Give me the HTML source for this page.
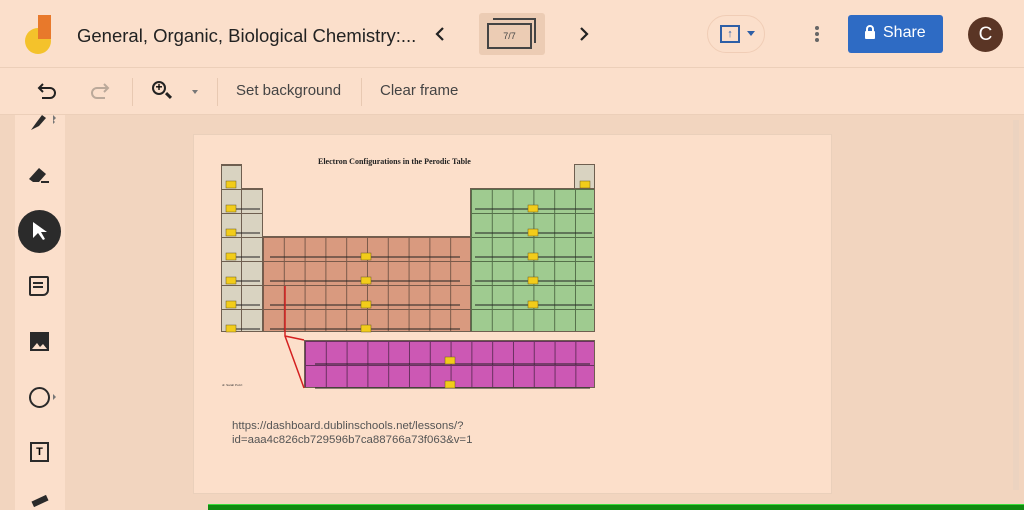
<!DOCTYPE html>
<html><head><style>
*{margin:0;padding:0;box-sizing:border-box}
body{width:1024px;height:510px;overflow:hidden;background:#f2d5bf;font-family:"Liberation Sans",sans-serif;position:relative}
.a{position:absolute}
.blk{position:absolute;border:1px solid #6f5f50}
</style></head><body>
<div class="a" style="left:0;top:0;width:1024px;height:68px;background:#fbdfcb;border-bottom:1px solid #eccfb9"></div>
<div class="a" style="left:25px;top:28px;width:26px;height:26px;border-radius:50%;background:#f4c22b"></div>
<div class="a" style="left:38px;top:15px;width:13px;height:24px;background:#e8792b"></div>
<div class="a" style="left:77px;top:25px;font-size:18.5px;color:#222">General, Organic, Biological Chemistry:...</div>
<svg class="a" style="left:433px;top:26px" width="14" height="16"><path d="M10 2 L4 8 L10 14" stroke="#222" stroke-width="2.2" fill="none"/></svg>
<div class="a" style="left:479px;top:13px;width:66px;height:42px;background:#ecccb4;border-radius:3px"></div>
<div class="a" style="left:493px;top:18px;width:43px;height:25px;border:2px solid #444;border-left:none;border-bottom:none"></div>
<div class="a" style="left:487px;top:23px;width:45px;height:26px;border:2px solid #444;font-size:9px;color:#444;text-align:center;line-height:22px;background:#ecccb4">7/7</div>
<svg class="a" style="left:577px;top:26px" width="14" height="16"><path d="M4 2 L10 8 L4 14" stroke="#222" stroke-width="2.2" fill="none"/></svg>
<div class="a" style="left:707px;top:15px;width:58px;height:38px;border:1px solid #f0cdb6;border-radius:19px"></div>
<div class="a" style="left:720px;top:25px;width:20px;height:18px;border:2px solid #2e5fa6;color:#2e5fa6;font-size:11px;text-align:center;line-height:14px;font-weight:bold">↑</div>
<div class="a" style="left:747px;top:31px;border:4px solid transparent;border-top:5px solid #2e5fa6"></div>
<div class="a" style="left:815px;top:26px;width:4px;height:4px;background:#666;border-radius:50%;box-shadow:0 6px #666,0 12px #666"></div>
<div class="a" style="left:848px;top:15px;width:95px;height:38px;background:#2e6bc4;border-radius:3px;color:#fff;font-size:16px;line-height:36px;padding-left:35px">Share</div>
<div class="a" style="left:865px;top:31px;width:10px;height:8px;background:#fff;border-radius:1px"></div>
<div class="a" style="left:866px;top:25px;width:8px;height:9px;border:2px solid #fff;border-radius:4px 4px 0 0"></div>
<div class="a" style="left:968px;top:17px;width:35px;height:35px;border-radius:50%;background:#5a3525;color:#fff;font-size:19px;text-align:center;line-height:35px">C</div>
<div class="a" style="left:0;top:68px;width:1024px;height:47px;background:#fbdfcb;border-bottom:1px solid #eccfb9"></div>
<svg class="a" style="left:37px;top:81px" width="22" height="20"><path d="M6 3 L2 7 L6 11 M2 7 H13 A5 5 0 0 1 13 17 H5" stroke="#222" stroke-width="2" fill="none"/></svg>
<svg class="a" style="left:88px;top:81px" width="22" height="20"><path d="M16 3 L20 7 L16 11 M20 7 H9 A5 5 0 0 0 9 17 H17" stroke="#bba99a" stroke-width="2" fill="none"/></svg>
<div class="a" style="left:132px;top:78px;width:1px;height:28px;background:#e8c9b2"></div>
<div class="a" style="left:152px;top:81px;width:14px;height:14px;border:2.5px solid #222;border-radius:50%;font-size:12px;line-height:9px;text-align:center;font-weight:bold">+</div>
<div class="a" style="left:165px;top:94px;width:7px;height:3px;background:#222;transform:rotate(45deg)"></div>
<div class="a" style="left:192px;top:90px;border:3px solid transparent;border-top:4px solid #777"></div>
<div class="a" style="left:217px;top:78px;width:1px;height:28px;background:#e8c9b2"></div>
<div class="a" style="left:236px;top:82px;font-size:15px;color:#444">Set background</div>
<div class="a" style="left:361px;top:78px;width:1px;height:28px;background:#e8c9b2"></div>
<div class="a" style="left:380px;top:82px;font-size:15px;color:#444">Clear frame</div>
<div class="a" style="left:15px;top:115px;width:50px;height:395px;background:#fbdfcb"></div>
<svg class="a" style="left:28px;top:113px" width="30" height="20"><path d="M3 17 L8 10 L14 2 L18 5 L11 13 Z" fill="#2a2a2a"/><path d="M25 7 L27 9 L25 11Z" fill="#777"/></svg>
<svg class="a" style="left:27px;top:163px" width="26" height="24"><path d="M2 16 L12 5 L19 11 L12 19 H6Z" fill="#2a2a2a"/><rect x="14" y="18" width="8" height="2" fill="#2a2a2a"/></svg>
<div class="a" style="left:18px;top:210px;width:43px;height:43px;border-radius:50%;background:#2b2b2b"></div>
<svg class="a" style="left:30px;top:220px" width="20" height="22"><path d="M3 2 L3 18 L8 13 L13 20 L15 19 L11 12 L17 12 Z" fill="#fff"/></svg>
<div class="a" style="left:29px;top:276px;width:20px;height:20px;border:2px solid #2a2a2a;border-radius:2px 2px 6px 2px"></div>
<div class="a" style="left:33px;top:282px;width:10px;height:2px;background:#2a2a2a;box-shadow:-0px 4px #2a2a2a"></div>
<div class="a" style="left:30px;top:332px;width:19px;height:19px;background:#2a2a2a"></div>
<svg class="a" style="left:31px;top:340px" width="17" height="10"><path d="M1 9 L6 3 L9 7 L12 4 L16 9Z" fill="#fbdfcb"/></svg>
<div class="a" style="left:29px;top:387px;width:21px;height:21px;border:2px solid #2a2a2a;border-radius:50%"></div>
<div class="a" style="left:53px;top:394px;border:3px solid transparent;border-left:3px solid #777"></div>
<div class="a" style="left:53px;top:115px;border:3px solid transparent;border-left:3px solid #777"></div>
<div class="a" style="left:30px;top:442px;width:19px;height:20px;border:2px solid #2a2a2a;font-size:11px;font-weight:bold;text-align:center;line-height:16px">T</div>
<div class="a" style="left:32px;top:498px;width:16px;height:6px;background:#2a2a2a;transform:rotate(-25deg)"></div>
<div class="a" style="left:193px;top:134px;width:639px;height:360px;background:#fcdfca;border:1px solid #ead0bb"></div>
<div class="a" style="left:1013px;top:120px;width:6px;height:370px;background:#ecd3c0"></div>
<div class="a" style="left:318px;top:157px;font-family:'Liberation Serif',serif;font-size:8px;font-weight:bold;color:#222">Electron Configurations in the Perodic Table</div>
<div class="blk" style="left:221px;top:164px;width:21px;height:168px;background:#d9d3c1;background-image:linear-gradient(#6f5f50 1px,transparent 1px);background-size:100% 24px"></div>
<div class="blk" style="left:241px;top:188px;width:22px;height:144px;background:#d9d3c1;background-image:linear-gradient(#6f5f50 1px,transparent 1px);background-size:100% 24px"></div>
<div class="blk" style="left:262px;top:236px;width:209px;height:96px;background:#d99a7f;background-image:linear-gradient(#7a5a4a 1px,transparent 1px),linear-gradient(90deg,#7a5a4a 1px,transparent 1px);background-size:20.8px 24px"></div>
<div class="blk" style="left:470px;top:188px;width:125px;height:144px;background:#9fcb90;background-image:linear-gradient(#55704a 1px,transparent 1px),linear-gradient(90deg,#55704a 1px,transparent 1px);background-size:20.8px 24px"></div>
<div class="blk" style="left:574px;top:164px;width:21px;height:25px;background:#d9d3c1"></div>
<div class="blk" style="left:304px;top:340px;width:291px;height:48px;background:#cc58b4;background-image:linear-gradient(#6a3060 1px,transparent 1px),linear-gradient(90deg,#6a3060 1px,transparent 1px);background-size:20.8px 24px"></div>
<svg class="a" style="left:220px;top:160px" width="380" height="235">
<g stroke="#222" stroke-width="1"><line x1="10" y1="49" x2="40" y2="49"/><line x1="10" y1="73" x2="40" y2="73"/><line x1="10" y1="97" x2="40" y2="97"/><line x1="10" y1="121" x2="40" y2="121"/><line x1="10" y1="145" x2="40" y2="145"/><line x1="10" y1="169" x2="40" y2="169"/>
<line x1="50" y1="97" x2="240" y2="97"/><line x1="50" y1="121" x2="240" y2="121"/><line x1="50" y1="145" x2="240" y2="145"/><line x1="50" y1="169" x2="240" y2="169"/>
<line x1="255" y1="49" x2="372" y2="49"/><line x1="255" y1="73" x2="372" y2="73"/><line x1="255" y1="97" x2="372" y2="97"/><line x1="255" y1="121" x2="372" y2="121"/><line x1="255" y1="145" x2="372" y2="145"/>
<line x1="95" y1="204" x2="370" y2="204"/><line x1="95" y1="228" x2="370" y2="228"/></g>
<g fill="#f2cc1a" stroke="#6a5a20" stroke-width=".5"><rect x="6" y="21" width="10" height="7"/><rect x="6" y="45" width="10" height="7"/><rect x="6" y="69" width="10" height="7"/><rect x="6" y="93" width="10" height="7"/><rect x="6" y="117" width="10" height="7"/><rect x="6" y="141" width="10" height="7"/><rect x="6" y="165" width="10" height="7"/><rect x="360" y="21" width="10" height="7"/>
<rect x="141" y="93" width="10" height="7"/><rect x="141" y="117" width="10" height="7"/><rect x="141" y="141" width="10" height="7"/><rect x="141" y="165" width="10" height="7"/>
<rect x="308" y="45" width="10" height="7"/><rect x="308" y="69" width="10" height="7"/><rect x="308" y="93" width="10" height="7"/><rect x="308" y="117" width="10" height="7"/><rect x="308" y="141" width="10" height="7"/>
<rect x="225" y="197" width="10" height="7"/><rect x="225" y="221" width="10" height="7"/></g>
<path d="M65 126 L65 176 L84 228 M65 176 L84 180" stroke="#d42020" stroke-width="1.5" fill="none"/>
<text x="2" y="226" font-size="3" fill="#333">dr. Sarah Pozzi</text>
</svg>
<div class="a" style="left:232px;top:419px;font-size:11px;color:#555;line-height:14px;transform:scaleX(1.04);transform-origin:left">https://dashboard.dublinschools.net/lessons/?<br>id=aaa4c826cb729596b7ca88766a73f063&amp;v=1</div>
<div class="a" style="left:208px;top:504px;width:816px;height:6px;background:#118a11;border-top:1px solid #3cdc3c"></div>
</body></html>
